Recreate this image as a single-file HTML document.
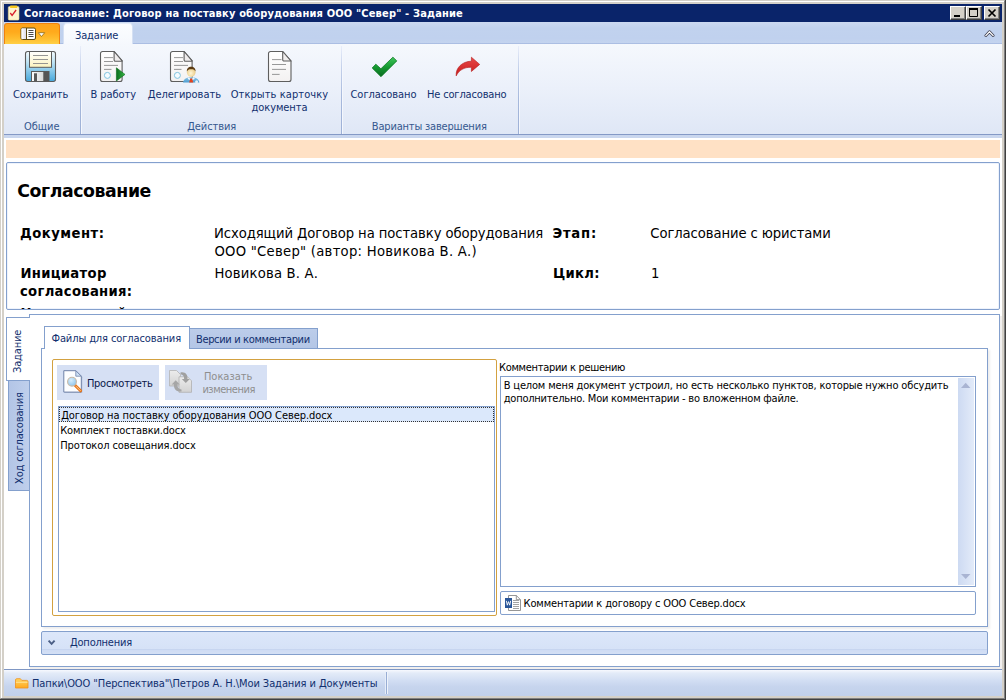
<!DOCTYPE html>
<html lang="ru">
<head>
<meta charset="utf-8">
<title>Согласование: Договор на поставку оборудования ООО "Север" - Задание</title>
<style>
*{box-sizing:border-box;margin:0;padding:0}
html,body{width:1006px;height:700px;overflow:hidden;background:#d4d0c8}
body{position:relative;font-family:"DejaVu Sans Condensed","Liberation Sans",sans-serif;font-size:11px;color:#000}
.a{position:absolute}
.t{position:absolute;white-space:pre}
#frame{left:0;top:0;width:1006px;height:700px;background:#d4d0c8;border-right:1px solid #404040;border-bottom:1px solid #404040}
#frame2{left:0;top:0;width:1005px;height:699px;border:1px solid;border-color:#d4d0c8 #808080 #808080 #d4d0c8}
#frame3{left:1px;top:1px;width:1003px;height:697px;border-left:1px solid #fff;border-top:1px solid #fff}
#client{left:4px;top:4px;width:998px;height:692px;background:#fff}
#title{left:4px;top:4px;width:998px;height:18px;background:#0a246a}
.wb{position:absolute;top:6px;width:16px;height:14px;background:#d4d0c8;border:1px solid;border-color:#fff #404040 #404040 #fff;box-shadow:inset -1px -1px 0 #808080}
#tabrow{left:4px;top:22px;width:998px;height:22px;background:linear-gradient(#cbd9f1,#c1d2ee 30%,#c0d1ee 80%,#c4d4ef);border-bottom:1px solid #abbee3}
#appbtn{left:4px;top:23px;width:56px;height:21px;border-radius:3px 3px 0 0;background:linear-gradient(#ffa41c,#ffaa1c 40%,#ffbb2c 70%,#ffd046);border:1px solid #f0820f;border-bottom:none}
#rtab{left:63px;top:23px;width:70px;height:22px;background:linear-gradient(#fcfdff,#f5f8fd);border-radius:4px 4px 0 0;border:1px solid #d5e0f3;border-bottom:none;border-top-color:#e6edf9}
#ribbon{left:4px;top:44px;width:998px;height:91px;background:linear-gradient(#f5f8fd,#ebf0fa 50%,#dfe7f6);border-bottom:1px solid #8499c6}
.sep{position:absolute;top:46px;width:1px;height:88px;background:linear-gradient(#e9eefa,#c3d0ea 25%,#a7b9dc 60%,#9db0d6);box-shadow:1px 0 0 #f4f7fd}
#obar{left:6px;top:140px;width:994px;height:18px;background:#ffe1c5}
.pn{position:absolute;border:1px solid #84a0cd;background:#fff}
</style>
</head>
<body>
<div class="a" id="frame"></div><div class="a" id="frame2"></div><div class="a" id="frame3"></div>
<div class="a" id="client"></div>
<div class="a" id="title"></div>
<div class="t" style='left:24px;top:7px;line-height:14px;font-size:11px;color:#fff;letter-spacing:0.164px;font-weight:700'>Согласование: Договор на поставку оборудования ООО "Север" - Задание</div>
<div class="wb" style="left:950px"></div><div class="wb" style="left:966px"></div><div class="wb" style="left:984px"></div>
<div class="a" id="tabrow"></div>
<div class="a" id="appbtn"></div>
<div class="a" id="rtab"></div>
<div class="t" style='left:75px;top:29px;line-height:14px;font-size:11px;color:#112f6e;letter-spacing:-0.167px'>Задание</div>
<div class="a" id="ribbon"></div>
<div class="a" style="left:4px;top:135px;width:998px;height:3px;background:#c9d6ee"></div>
<div class="sep" style="left:80px"></div><div class="sep" style="left:341px"></div><div class="sep" style="left:518px"></div>
<div class="t" style='left:13px;top:88px;line-height:14px;font-size:11px;color:#112f6e;letter-spacing:-0.05px'>Сохранить</div>
<div class="t" style='left:90.6px;top:88px;line-height:14px;font-size:11px;color:#112f6e;letter-spacing:-0.086px'>В работу</div>
<div class="t" style='left:147.7px;top:88px;line-height:14px;font-size:11px;color:#112f6e;letter-spacing:-0.036px'>Делегировать</div>
<div class="t" style='left:230.7px;top:88px;line-height:14px;font-size:11px;color:#112f6e;letter-spacing:0.087px'>Открыть карточку</div>
<div class="t" style='left:251.6px;top:101px;line-height:14px;font-size:11px;color:#112f6e;letter-spacing:-0.088px'>документа</div>
<div class="t" style='left:350.5px;top:88px;line-height:14px;font-size:11px;color:#112f6e;letter-spacing:-0.04px'>Согласовано</div>
<div class="t" style='left:426.9px;top:88px;line-height:14px;font-size:11px;color:#112f6e;letter-spacing:-0.146px'>Не согласовано</div>
<div class="t" style='left:23.9px;top:120px;line-height:14px;font-size:11px;color:#35588f;letter-spacing:0px'>Общие</div>
<div class="t" style='left:187.2px;top:120px;line-height:14px;font-size:11px;color:#35588f;letter-spacing:-0.1px'>Действия</div>
<div class="t" style='left:371.8px;top:120px;line-height:14px;font-size:11px;color:#35588f;letter-spacing:-0.183px'>Варианты завершения</div>
<div class="a" id="obar"></div>

<div class="pn" style="left:6px;top:162px;width:994px;height:148px;border-radius:2px;box-shadow:inset 0 0 0 1px #eef3fc"></div>
<div class="a" style="left:7px;top:163px;width:992px;height:146px;overflow:hidden"><div class="a" style="left:-7px;top:-163px;width:1006px;height:700px">
<div class="t" style='left:17.3px;top:180px;line-height:23px;font-size:17.33px;color:#000;letter-spacing:-0.427px;font-weight:700;font-family:"DejaVu Sans","Liberation Sans",sans-serif'>Согласование</div>
<div class="t" style='left:19.9px;top:223px;line-height:19px;font-size:14.67px;color:#000;letter-spacing:0.5px;font-weight:700'>Документ:</div>
<div class="t" style='left:214px;top:223px;line-height:19px;font-size:14.67px;color:#000;letter-spacing:-0.078px'>Исходящий Договор на поставку оборудования</div>
<div class="t" style='left:214.4px;top:241px;line-height:19px;font-size:14.67px;color:#000;letter-spacing:0.271px'>ООО "Север" (автор: Новикова В. А.)</div>
<div class="t" style='left:552.4px;top:223px;line-height:19px;font-size:14.67px;color:#000;letter-spacing:0.825px;font-weight:700'>Этап:</div>
<div class="t" style='left:650.3px;top:223px;line-height:19px;font-size:14.67px;color:#000;letter-spacing:-0.086px'>Согласование с юристами</div>
<div class="t" style='left:20.4px;top:263px;line-height:19px;font-size:14.67px;color:#000;letter-spacing:0.312px;font-weight:700'>Инициатор</div>
<div class="t" style='left:20px;top:281px;line-height:19px;font-size:14.67px;color:#000;letter-spacing:0.292px;font-weight:700'>согласования:</div>
<div class="t" style='left:20.4px;top:303px;line-height:19px;font-size:14.67px;color:#000;letter-spacing:0.3px;font-weight:700'>Назначенный</div>
<div class="t" style='left:214.4px;top:263px;line-height:19px;font-size:14.67px;color:#000;letter-spacing:0.2px'>Новикова В. А.</div>
<div class="t" style='left:553px;top:263px;line-height:19px;font-size:14.67px;color:#000;letter-spacing:0.3px;font-weight:700'>Цикл:</div>
<div class="t" style='left:650.9px;top:263px;line-height:19px;font-size:14.67px;color:#000;letter-spacing:0px'>1</div>
</div></div>

<div class="a" style="left:1000px;top:316px;width:2px;height:353px;background:#f1efee"></div><div class="a" style="left:30px;top:667px;width:972px;height:2px;background:#f1efee"></div>
<!-- outer tab control -->
<div class="pn" style="left:29px;top:314px;width:971px;height:353px"></div>
<div class="pn" style="left:8px;top:380px;width:22px;height:111px;background:linear-gradient(90deg,#b3c5e6,#bfcfec)"></div>
<div class="pn" style="left:6px;top:317px;width:24px;height:64px;border-right:none;border-radius:1px 0 0 1px"></div>
<div class="t" id="vt1" style="left:11px;top:373px;line-height:14px;transform-origin:0 0;transform:rotate(-90deg);color:#112f6e;letter-spacing:-0.16px">Задание</div>
<div class="t" id="vt2" style="left:12.5px;top:484px;line-height:14px;transform-origin:0 0;transform:rotate(-90deg);color:#112f6e;letter-spacing:-0.15px">Ход согласования</div>

<!-- inner tab control -->
<div class="pn" style="left:41px;top:348px;width:947px;height:279px;box-shadow:2px 2px 2px rgba(0,0,0,.07)"></div>
<div class="pn" style="left:189px;top:328px;width:129px;height:21px;background:linear-gradient(#bccdea,#b4c6e6)"></div>
<div class="pn" style="left:44px;top:326px;width:146px;height:23px;border-bottom:none"></div>
<div class="t" style='left:51.5px;top:332px;line-height:14px;font-size:11px;color:#112f6e;letter-spacing:-0.11px'>Файлы для согласования</div>
<div class="t" style='left:196px;top:333px;line-height:14px;font-size:11px;color:#112f6e;letter-spacing:-0.347px'>Версии и комментарии</div>

<div class="pn" style="left:52px;top:359px;width:445px;height:257px;border-color:#d3a140;border-radius:2px"></div>
<div class="a" style="left:57px;top:365px;width:102px;height:35px;background:#d6e0f4"></div>
<div class="a" style="left:165px;top:365px;width:102px;height:35px;background:#d6e0f4"></div>
<div class="t" style='left:86.9px;top:377px;line-height:14px;font-size:11px;color:#0a1648;letter-spacing:-0.25px'>Просмотреть</div>
<div class="t" style='left:203.9px;top:370px;line-height:14px;font-size:11px;color:#8e8e8e;letter-spacing:0px'>Показать</div>
<div class="t" style='left:202.4px;top:383px;line-height:14px;font-size:11px;color:#8e8e8e;letter-spacing:-0.463px'>изменения</div>
<div class="pn" style="left:58px;top:406px;width:437px;height:206px;border-color:#84a0cd"></div>
<div class="a" style="left:59px;top:407px;width:435px;height:15px;background:#dbe8fb;border:1px dotted #333"></div>
<div class="t" style='left:61.2px;top:409px;line-height:14px;font-size:11px;color:#000;letter-spacing:-0.065px'>Договор на поставку оборудования ООО Север.docx</div>
<div class="t" style='left:60.2px;top:424px;line-height:14px;font-size:11px;color:#000;letter-spacing:-0.167px'>Комплект поставки.docx</div>
<div class="t" style='left:60.2px;top:439px;line-height:14px;font-size:11px;color:#000;letter-spacing:-0.086px'>Протокол совещания.docx</div>

<div class="t" style='left:499px;top:361px;line-height:14px;font-size:11px;color:#000;letter-spacing:-0.31px'>Комментарии к решению</div>
<div class="pn" style="left:500px;top:376px;width:476px;height:211px"></div>
<div class="a" style="left:958px;top:378px;width:16px;height:207px;background:linear-gradient(90deg,#cddaf2,#e3ebf9)"></div>
<div class="t" style='left:503.7px;top:379px;line-height:14px;font-size:11px;color:#000;letter-spacing:-0.159px'>В целом меня документ устроил, но есть несколько пунктов, которые нужно обсудить</div>
<div class="t" style='left:503.7px;top:392px;line-height:14px;font-size:11px;color:#000;letter-spacing:-0.222px'>дополнительно. Мои комментарии - во вложенном файле.</div>
<div class="pn" style="left:500px;top:591px;width:476px;height:24px;border-radius:2px"></div>
<div class="t" style='left:523.6px;top:597px;line-height:14px;font-size:11px;color:#000;letter-spacing:-0.161px'>Комментарии к договору с ООО Север.docx</div>

<div class="pn" style="left:41px;top:631px;width:947px;height:24px;background:linear-gradient(#dce7fa,#d6e2f7 76%,#c4d3ef 78%,#cfdcf4 84%,#d4e0f5);border-radius:2px"></div>
<div class="t" style='left:70px;top:636px;line-height:14px;font-size:11px;color:#112f6e;letter-spacing:-0.211px'>Дополнения</div>

<div class="a" style="left:4px;top:669px;width:998px;height:1px;background:#7f97c4"></div>
<div class="a" style="left:4px;top:670px;width:998px;height:26px;background:linear-gradient(#f7f9fe,#e3ebf8 12%,#d2def3 40%,#c6d4ed 65%,#c1d0eb)"></div>
<div class="a" style="left:386px;top:672px;width:1px;height:22px;background:#98add4;box-shadow:1px 0 0 #eef3fb,-1px 0 0 #e6edf9"></div>
<div class="t" style='left:31.9px;top:677px;line-height:14px;font-size:11px;color:#112f6e;letter-spacing:-0.081px'>Папки\ООО "Перспектива"\Петров А. Н.\Мои Задания и Документы</div>
<svg class="a" style="left:0;top:0" width="1006" height="700" viewBox="0 0 1006 700">
<defs>
<linearGradient id="gfl" x1="0" y1="0" x2="0" y2="1"><stop offset="0" stop-color="#f4fbfe"/><stop offset=".35" stop-color="#bfe4f5"/><stop offset="1" stop-color="#46a8dc"/></linearGradient>
<linearGradient id="glb" x1="0" y1="0" x2="0" y2="1"><stop offset="0" stop-color="#ffffff"/><stop offset="1" stop-color="#fbf3bf"/></linearGradient>
<linearGradient id="gmt" x1="0" y1="0" x2="1" y2="0"><stop offset="0" stop-color="#ffffff"/><stop offset="1" stop-color="#c8c8c8"/></linearGradient>
<linearGradient id="gdoc" x1="0" y1="0" x2="0" y2="1"><stop offset="0" stop-color="#ffffff"/><stop offset="1" stop-color="#f3f1f1"/></linearGradient>
<linearGradient id="ggr" x1="0" y1="0" x2="1" y2="0"><stop offset="0" stop-color="#0c6e1c"/><stop offset="1" stop-color="#35b545"/></linearGradient>
<linearGradient id="gck" x1="0" y1="0" x2="0" y2="1"><stop offset="0" stop-color="#3fc45a"/><stop offset=".5" stop-color="#159a32"/><stop offset="1" stop-color="#0a6a20"/></linearGradient>
<linearGradient id="grd" x1="0" y1="0" x2="0" y2="1"><stop offset="0" stop-color="#e84848"/><stop offset="1" stop-color="#c81c1c"/></linearGradient>
<linearGradient id="gbody" x1="0" y1="0" x2="0" y2="1"><stop offset="0" stop-color="#8cc4e6"/><stop offset="1" stop-color="#4a9bd0"/></linearGradient>
<radialGradient id="ghead" cx=".45" cy=".6" r=".6"><stop offset="0" stop-color="#fff6d8"/><stop offset="1" stop-color="#e8c880"/></radialGradient>
<linearGradient id="gab" x1="0" y1="0" x2="1" y2="0"><stop offset="0" stop-color="#ffffff"/><stop offset="1" stop-color="#dcdcec"/></linearGradient>
<radialGradient id="glens" cx=".4" cy=".35" r=".7"><stop offset="0" stop-color="#d8eefc"/><stop offset="1" stop-color="#8cc4ec"/></radialGradient>
<linearGradient id="ggray" x1="0" y1="0" x2="0" y2="1"><stop offset="0" stop-color="#ececec"/><stop offset="1" stop-color="#d2d2d2"/></linearGradient>
<linearGradient id="gfold" x1="0" y1="0" x2="0" y2="1"><stop offset="0" stop-color="#ffd560"/><stop offset="1" stop-color="#ffa820"/></linearGradient>
<g id="doc">
<path d="M2 0.5H13.6L21.600 9.800V28.500a2 2 0 0 1-2 2H2a2 2 0 0 1-2-2V2.500a2 2 0 0 1 2-2z" fill="url(#gdoc)" stroke="#5e5e5e" stroke-width="1.100"/>
<path d="M13.600 0.500V9a1.300 1.300 0 0 0 1.300 1.300H21.600V9.800z" fill="#efecec" stroke="#5e5e5e" stroke-width="1.100" stroke-linejoin="round"/>
</g>
</defs>
<!-- title icon: clipboard -->
<rect x="8.300" y="6.500" width="10.700" height="13.600" rx="1.200" fill="#fdf4cf" stroke="#e8d68a" stroke-width="0.600"/>
<rect x="10" y="5.500" width="7.300" height="2.600" rx="0.800" fill="#f7c81c"/>
<path d="M10.300 13l1.800 2.400 4-5.400" fill="none" stroke="#d81e2c" stroke-width="1.300"/>
<!-- window buttons glyphs -->
<rect x="954" y="15" width="6" height="2" fill="#000"/>
<path d="M969.500 9.500h8v7h-8z" fill="none" stroke="#000" stroke-width="1"/><rect x="969" y="8" width="9" height="2" fill="#000"/>
<path d="M988.500 9.500l7 7M995.500 9.500l-7 7" stroke="#000" stroke-width="1.700"/>
<!-- collapse chevron -->
<path d="M985.800 35.600l3.700-3.900 3.700 3.900" fill="none" stroke="#3a3a4a" stroke-width="2.800" stroke-linejoin="round" stroke-linecap="round"/>
<path d="M985.800 35.600l3.700-3.900 3.700 3.900" fill="none" stroke="#fff" stroke-width="1.300" stroke-linejoin="round" stroke-linecap="round"/>
<!-- app button icon -->
<rect x="21" y="28" width="14.500" height="11.500" rx="1.500" fill="#fff" stroke="#5c4a12" stroke-width="1"/>
<rect x="21.500" y="28.500" width="4.500" height="10.500" fill="url(#gab)"/>
<path d="M26.500 28v11.500" stroke="#5c4a12" stroke-width="1"/>
<path d="M28.500 30.500h5M28.500 32.500h5M28.500 34.500h5M28.500 36.500h5" stroke="#4a4a4a" stroke-width="1"/>
<path d="M38.300 32.700h6.400l-3.200 3.800z" fill="#fff" stroke="#8a6a1a" stroke-width="0.800" stroke-linejoin="round"/>
<!-- save -->
<rect x="25.500" y="51.500" width="30" height="30" rx="2.200" fill="url(#gfl)" stroke="#5c5c5c" stroke-width="1.100"/>
<rect x="29.500" y="51.500" width="22" height="15.800" fill="url(#glb)" stroke="#5c5c5c" stroke-width="1"/>
<path d="M33 55.500h15M33 59.500h15M33 63.500h15" stroke="#8a8a8a" stroke-width="0.900"/>
<rect x="31.500" y="71.500" width="17.500" height="10" fill="url(#gmt)" stroke="#5c5c5c" stroke-width="1"/>
<rect x="43.300" y="71.500" width="5.700" height="10" fill="#555"/>
<rect x="34" y="73.300" width="3" height="8.200" fill="#5a5a5a"/>
<!-- v rabotu -->
<use href="#doc" x="100.500" y="51"/>
<path d="M104 57.600h9M104 61.500h9M104 65.400h14M104 69.400h7.500" stroke="#8c8c8c" stroke-width="0.900"/>
<circle cx="107.400" cy="75.400" r="3" fill="#f4fcff" stroke="#7fc3e0" stroke-width="1"/>
<path d="M116.400 67.800L125 74.400L116.400 81z" fill="url(#ggr)" stroke="#0b6a1a" stroke-width="0.600" stroke-linejoin="round"/>
<!-- delegate -->
<use href="#doc" x="170.500" y="51"/>
<path d="M174 57.600h9M174 61.500h9M174 65.400h14M174 69.400h7.500" stroke="#8c8c8c" stroke-width="0.900"/>
<circle cx="177.400" cy="75.400" r="3" fill="#f4fcff" stroke="#7fc3e0" stroke-width="1"/>
<path d="M183 82.600c0.600-3.600 3.600-5.300 8.200-5.300s7.600 1.700 8.200 5.300z" fill="url(#gbody)"/>
<path d="M188.600 77.300l2.600 2.200 2.600-2.200 1 1.800-3.600 1.400-3.600-1.400z" fill="#f4f8fc"/>
<path d="M190.300 78.400h1.800l1.200 4.200h-4.200z" fill="#e4421c"/>
<circle cx="196.600" cy="81.800" r="1.500" fill="#e8f2fa"/>
<ellipse cx="191.200" cy="72.200" rx="4.300" ry="4.800" fill="url(#ghead)"/>
<path d="M186.900 71.600c-0.300-3.200 1.600-4.800 4.300-4.800s4.600 1.600 4.300 4.800c-0.800-1.700-1.800-2.300-4.300-2.300s-3.500 0.600-4.300 2.300z" fill="#5a3a12"/>
<!-- open card -->
<g transform="translate(268.500 51)">
<path d="M2 0.500H14.200L22.500 10V28.500a2 2 0 0 1-2 2H2a2 2 0 0 1-2-2V2.500a2 2 0 0 1 2-2z" fill="url(#gdoc)" stroke="#5e5e5e" stroke-width="1.100"/>
<path d="M14.200 0.500V8.700a1.300 1.300 0 0 0 1.300 1.300H22.500z" fill="#efecec" stroke="#5e5e5e" stroke-width="1.100" stroke-linejoin="round"/>
<path d="M3.500 8.600h9.500M3.500 13.500h14M3.500 18.400h14M3.500 23.400h7.600" stroke="#8c8c8c" stroke-width="0.900"/>
</g>
<!-- check -->
<path d="M372.200 68L375.800 64.200L380.900 68.800L392.900 57.200L396.800 60.900L381 76.700z" fill="url(#gck)" stroke="#0c7a22" stroke-width="0.800" stroke-linejoin="round"/>
<!-- red arrow -->
<path d="M456.200 75.900C455.400 68 462 61.400 471.400 61.200V57.200L479.700 64.400L471.400 71.500V67.300C464 67 458.800 70.400 456.200 75.900z" fill="url(#grd)" stroke="#b41a1a" stroke-width="0.600" stroke-linejoin="round"/>
<!-- preview icon -->
<path d="M64.800 372.200h12.500l5 5v15.600h-17.500z" fill="#9aa6c0" opacity=".55"/>
<path d="M63.800 370.700h12l5.500 5.500v15.900h-17.500z" fill="#fdfeff" stroke="#6f82a8" stroke-width="1" stroke-linejoin="round"/>
<path d="M75.800 370.700v5.500h5.500z" fill="#cfe2f6" stroke="#6f82a8" stroke-width="0.800" stroke-linejoin="round"/>
<path d="M75 385.200l5.600 5.600" stroke="#e8761a" stroke-width="3" stroke-linecap="round"/>
<path d="M76.300 386.500l4 4" stroke="#ffd9a0" stroke-width="0.900" stroke-linecap="round"/>
<circle cx="72" cy="381.700" r="4.400" fill="url(#glens)" stroke="#c9b8a4" stroke-width="1.100"/>
<!-- show changes icon (disabled) -->
<path d="M169.500 370.500h7l4 4v11.500h-11z" fill="url(#ggray)" stroke="#b4b4b4" stroke-width="0.800"/>
<path d="M179 376.800h8.500l4 4v11.500h-12.500z" fill="url(#ggray)" stroke="#b0b0b0" stroke-width="0.800"/>
<path d="M180.500 372.500c4.500-1 7.500 2 7 6.500h2.300l-4 4-4-4h2.300c0.300-2.800-1.200-4.600-3.600-4.800z" fill="#a0a0a0"/>
<path d="M181.500 391.500c-5 0.800-8-2.500-7.500-7h-2.300l4-4.200 4 4.200h-2.300c-0.300 3 1.500 4.800 4.100 5z" fill="#a6a6a6"/>
<!-- word icon -->
<path d="M508.500 595.500h7.800l4.200 4.200v10.800h-12z" fill="#fff" stroke="#8a8a8a" stroke-width="0.900"/>
<path d="M516.300 595.500v4.200h4.200" fill="none" stroke="#8a8a8a" stroke-width="0.900"/>
<path d="M513 600.500h6M513 602.500h6M513 604.500h6M513 606.500h6M513 608.500h6" stroke="#9a9a9a" stroke-width="0.900"/>
<rect x="505" y="598" width="7" height="10" fill="#2a5699"/>
<path d="M506.300 600.800l1 4.400 1.200-3.600 1.200 3.600 1-4.400" fill="none" stroke="#fff" stroke-width="0.900"/>
<!-- scrollbar arrows -->
<path d="M961 388l4.700-5.200 4.700 5.200z" fill="#a9b4d2"/>
<path d="M961 574l4.700 5 4.700-5z" fill="#a9b4d2"/>
<!-- expander chevron -->
<path d="M48.600 640.600l3 3.300 3-3.300" fill="none" stroke="#4b5f86" stroke-width="1.900"/>
<!-- folder -->
<path d="M15.500 680c0-0.800 0.500-1.300 1.300-1.300h3.600l1.400 1.700h5c0.700 0 1.200 0.500 1.200 1.200v6.400h-12.500z" fill="url(#gfold)" stroke="#f0921c" stroke-width="0.800"/>
<path d="M15.900 682.300h11.700" stroke="#ffe8a8" stroke-width="0.800"/>
</svg>

</body>
</html>
